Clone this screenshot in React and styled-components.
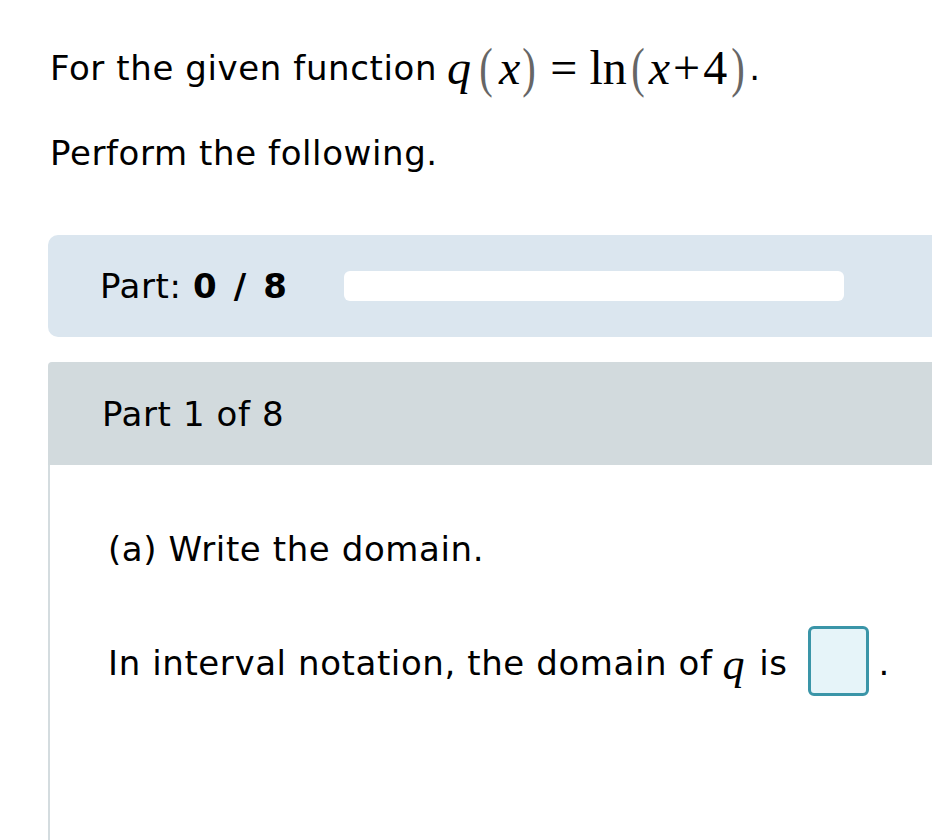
import styled, { createGlobalStyle } from 'styled-components';

const GlobalStyle = createGlobalStyle`
  html, body {
    margin: 0;
    padding: 0;
    background: #ffffff;
    overflow: hidden;
  }
  body {
    font-family: "DejaVu Sans", Verdana, sans-serif;
    color: #000000;
  }
`;

const Page = styled.div`
  width: 932px;
  height: 840px;
  padding: 38px 0 0 48px;
  box-sizing: border-box;
  overflow: hidden;
  letter-spacing: 0.6px;
`;

const Para = styled.p`
  margin: 0 0 ${(props) => props.gap || 0}px 2px;
  font-size: 34px;
  line-height: 60px;
  white-space: nowrap;
  display: flex;
  align-items: center;
`;

const Math = styled.span`
  font-family: "Liberation Serif", "Times New Roman", serif;
  font-size: 48px;
  letter-spacing: 0;
  margin-left: 8px;
  display: inline-flex;
  align-items: center;
`;

const Var = styled.i`
  font-style: italic;
  margin: 0 ${(props) => props.m || 0}px;
`;

const Paren = styled.span`
  color: #666666;
  font-size: 54px;
  font-weight: 300;
  transform: scaleX(0.75);
  margin: 0 ${(props) => props.m || 0}px;
`;

const Op = styled.span`
  margin: 0 ${(props) => props.m || 0}px;
`;

const ProgressPanel = styled.div`
  display: flex;
  align-items: center;
  height: 102px;
  margin-right: -20px;
  padding-left: 52px;
  background: #dbe6ef;
  border-radius: 10px 0 0 10px;
`;

const PartLabel = styled.div`
  width: 244px;
  font-size: 34px;
  white-space: nowrap;

  b {
    font-weight: bold;
    word-spacing: 4px;
  }
`;

const Bar = styled.div`
  width: 500px;
  height: 30px;
  background: #ffffff;
  border-radius: 6px;
`;

const PartCard = styled.div`
  margin-top: 25px;
  margin-right: -20px;
`;

const PartHeader = styled.div`
  display: flex;
  align-items: center;
  height: 103px;
  padding-left: 54px;
  background: #d2dadd;
  border-radius: 4px 0 0 0;
  font-size: 34px;
`;

const PartBody = styled.div`
  height: 400px;
  border-left: 2px solid #d4dcdf;
  padding: 62px 0 0 58px;
`;

const Question = styled.p`
  margin: 0 0 ${(props) => props.gap || 0}px 0;
  font-size: 34px;
  line-height: 44px;
  display: flex;
  align-items: center;
  white-space: nowrap;
`;

const AnswerBox = styled.span`
  display: inline-block;
  width: 61px;
  height: 70px;
  margin: -4px 10px 0 20px;
  box-sizing: border-box;
  border: 3px solid #3a95a8;
  border-radius: 6px;
  background: #e6f4f9;
`;

const QVar = styled.i`
  font-family: "Liberation Serif", "Times New Roman", serif;
  font-size: 44px;
  margin: 4px 14px 0 10px;
`;

export default function App() {
  return (
    <Page>
      <GlobalStyle />
      <Para gap={25}>
        For the given function
        <Math>
          <Var m={2}>q</Var>
          <Paren m={4}>(</Paren>
          <Var>x</Var>
          <Paren>)</Paren>
          <Op m={12}>=</Op>
          ln
          <Paren m={2}>(</Paren>
          <Var>x</Var>
          <Op m={3}>+</Op>4<Paren m={2}>)</Paren>
        </Math>
        .
      </Para>
      <Para gap={52}>Perform the following.</Para>

      <ProgressPanel>
        <PartLabel>
          Part: <b>0 / 8</b>
        </PartLabel>
        <Bar />
      </ProgressPanel>

      <PartCard>
        <PartHeader>Part 1 of 8</PartHeader>
        <PartBody>
          <Question gap={59}>(a) Write the domain.</Question>
          <Question>
            In interval notation, the domain of<QVar>q</QVar>is
            <AnswerBox />.
          </Question>
        </PartBody>
      </PartCard>
    </Page>
  );
}
